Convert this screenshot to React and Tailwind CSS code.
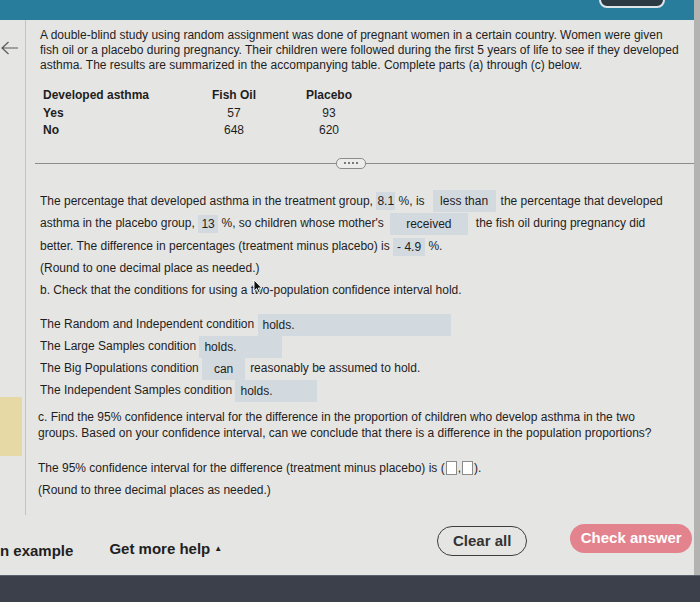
import React from "react";

function Box({ w, children, align = "center", h = "h-[22px]" }) {
  return (
    <span
      className={`inline-block align-middle bg-[#d2d9df] ${h} leading-[22px] ${align === "left" ? "text-left pl-[5px]" : "text-center"}`}
      style={{ width: w }}
    >
      {children}
    </span>
  );
}

function Num({ w, children }) {
  return (
    <span
      className="inline-block align-middle bg-[#d2d9df] h-[18px] leading-[18px] text-center"
      style={{ width: w }}
    >
      {children}
    </span>
  );
}

export default function App() {
  return (
    <div className="w-[700px] h-[602px] overflow-hidden flex flex-col bg-[#e5e5e3] text-[#1e1e1e] font-['Liberation_Sans',Arial,sans-serif]">
      <div className="flex flex-1 min-h-0">
        <div className="flex-1 flex flex-col min-w-0">
          {/* top bar */}
          <div className="h-[20px] bg-[#287c9c] flex justify-end items-start pr-[29px] shrink-0">
            <div className="-mt-[14px] h-[22px] w-[66px] rounded-[8px] border-2 border-[#dfe6ea] bg-[#2c3a44]" />
          </div>

          {/* main */}
          <div className="flex h-[495px] shrink-0">
            <div className="w-[26px] border-r border-[#c3c3c1] flex flex-col shrink-0">
              <svg className="mt-[21px]" width="20" height="14" viewBox="0 0 20 14">
                <path d="M18 7 H2 M8.5 1 L2 7 L8.5 13" fill="none" stroke="#5a5a5a" strokeWidth="1.2" />
              </svg>
              <div className="mt-[342px] h-[59px] w-[22px] bg-[#e6d9a6]" />
            </div>

            <div className="flex-1 flex flex-col pl-[14px] text-[12px]">
              <div className="pt-[8px] leading-[15px] w-[640px]">
                <div>A double-blind study using random assignment was done of pregnant women in a certain country. Women were given</div>
                <div>fish oil or a placebo during pregnancy. Their children were followed during the first 5 years of life to see if they developed</div>
                <div>asthma. The results are summarized in the accompanying table. Complete parts (a) through (c) below.</div>
              </div>

              <div className="mt-[14px] ml-[3px] grid grid-cols-[145px_92px_98px] leading-[17.5px]">
                <div className="font-bold">Developed asthma</div>
                <div className="font-bold text-center">Fish Oil</div>
                <div className="font-bold text-center">Placebo</div>
                <div className="font-bold">Yes</div>
                <div className="text-center">57</div>
                <div className="text-center">93</div>
                <div className="font-bold">No</div>
                <div className="text-center">648</div>
                <div className="text-center">620</div>
              </div>

              <div className="mt-[18px] -ml-[5px] flex items-center h-[11px]">
                <div className="w-[301px] h-px bg-[#8c8c8c]" />
                <div className="w-[30px] h-[11px] rounded-[5px] border border-[#8c8c8c] bg-[#ececea] flex items-center justify-center gap-[2px]">
                  <span className="w-[2px] h-[2px] bg-[#555] rounded-full" />
                  <span className="w-[2px] h-[2px] bg-[#555] rounded-full" />
                  <span className="w-[2px] h-[2px] bg-[#555] rounded-full" />
                  <span className="w-[2px] h-[2px] bg-[#555] rounded-full" />
                </div>
                <div className="flex-1 h-px bg-[#8c8c8c]" />
              </div>

              <div className="mt-[21px] leading-[22px]">
                <div className="whitespace-nowrap">
                  The percentage that developed asthma in the treatment group,{" "}
                  <Num w={19}>8.1</Num>
                  {" "}%, is
                  <span className="ml-[8px]"><Box w={63}>less than</Box></span>
                  <span className="ml-[5px]">the percentage that developed</span>
                </div>
                <div className="whitespace-nowrap">
                  asthma in the placebo group,{" "}
                  <Num w={20}>13</Num>
                  {" "}%, so children whose mother's
                  <span className="ml-[6px]"><Box w={78}>received</Box></span>
                  <span className="ml-[8px]">the fish oil during pregnancy did</span>
                </div>
                <div className="whitespace-nowrap">
                  better. The difference in percentages (treatment minus placebo) is{" "}
                  <Num w={32}>- 4.9</Num>
                  {" "}%.
                </div>
                <div>(Round to one decimal place as needed.)</div>
                <div className="relative whitespace-nowrap">
                  b. Check that the conditions for using a two-population confidence interval hold.
                  <svg className="absolute left-[213px] top-[0px]" width="10" height="15" viewBox="0 0 10 15">
                    <path d="M1 1 L1 12 L3.6 9.6 L5.6 14 L7.2 13.3 L5.3 9 L8.8 9 Z" fill="#111" stroke="#fff" strokeWidth="0.9" />
                  </svg>
                </div>
              </div>

              <div className="mt-[13px] leading-[21.5px]">
                <div className="whitespace-nowrap">
                  The Random and Independent condition{" "}
                  <Box w={193} align="left">holds.</Box>
                </div>
                <div className="whitespace-nowrap">
                  The Large Samples condition{" "}
                  <Box w={83} align="left">holds.</Box>
                </div>
                <div className="whitespace-nowrap">
                  The Big Populations condition{" "}
                  <Box w={43}>can</Box>
                  <span className="ml-[5px]">reasonably be assumed to hold.</span>
                </div>
                <div className="whitespace-nowrap">
                  The Independent Samples condition{" "}
                  <Box w={82} align="left">holds.</Box>
                </div>
              </div>

              <div className="mt-[7px] -ml-[2px] leading-[16px]">
                <div className="whitespace-nowrap">c. Find the 95% confidence interval for the difference in the proportion of children who develop asthma in the two</div>
                <div className="whitespace-nowrap">groups. Based on your confidence interval, can we conclude that there is a difference in the population proportions?</div>
              </div>

              <div className="mt-[16px] -ml-[2px] leading-[22px]">
                <div className="whitespace-nowrap flex items-center">
                  <span>The 95% confidence interval for the difference (treatment minus placebo) is (</span>
                  <span className="inline-block w-[11px] h-[14px] bg-white border border-[#8a8a8a] mx-[1px]" />
                  <span>,</span>
                  <span className="inline-block w-[11px] h-[14px] bg-white border border-[#8a8a8a] mx-[1px]" />
                  <span>).</span>
                </div>
                <div>(Round to three decimal places as needed.)</div>
              </div>
            </div>
          </div>

          {/* bottom toolbar */}
          <div className="flex-1 flex items-start text-[15px] font-bold text-[#1f1f1f]">
            <div className="mt-[27px] leading-[17px]">n example</div>
            <div className="mt-[25px] ml-[36px] leading-[17px] flex items-center">
              Get more help
              <span className="ml-[4px] text-[8px]">▲</span>
            </div>
            <div className="ml-[215px] mt-[11px] w-[90px] h-[30px] rounded-full border-[1.5px] border-[#3e3e3e] flex items-center justify-center text-[#333]">
              Clear all
            </div>
            <div className="ml-[43px] mt-[9px] w-[122px] h-[29px] rounded-full bg-[#e3838e] flex items-center justify-center text-white">
              Check answer
            </div>
          </div>
        </div>
        <div className="w-[6px] bg-[#b3b4b2] shrink-0" />
      </div>
      <div className="h-[27px] bg-[#3b404b] border-t border-[#5a606b] shrink-0" />
    </div>
  );
}
